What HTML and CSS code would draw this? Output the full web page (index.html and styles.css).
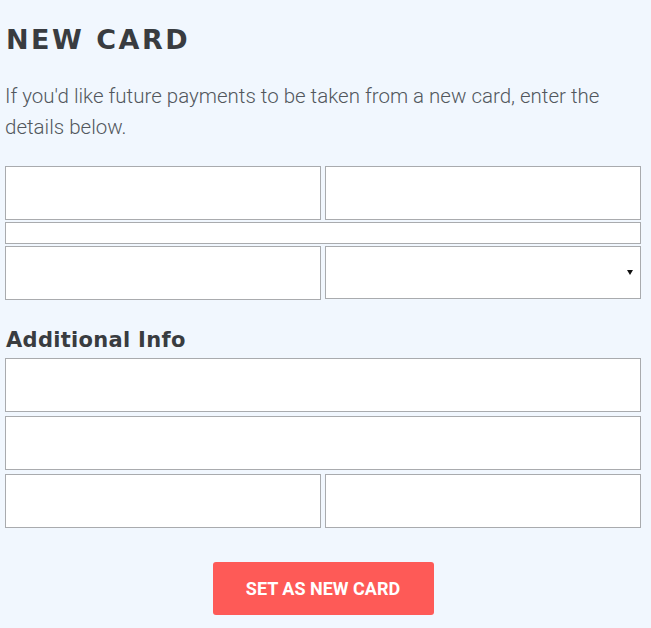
FILE: index.html
```html
<!DOCTYPE html>
<html>
<head>
<meta charset="utf-8">
<link rel="stylesheet" href="styles.css">
</head>
<body>
<div class="page">
  <h1 class="title">NEW CARD</h1>
  <p class="intro">If you'd like future payments to be taken from a new card, enter the details below.</p>
  <div class="card-fields">
    <div class="row two">
      <input class="field tall" type="text">
      <input class="field tall" type="text">
    </div>
    <div class="row">
      <input class="field thin" type="text">
    </div>
    <div class="row two">
      <input class="field tall" type="text">
      <div class="select-wrap"><select class="field select"><option></option></select></div>
    </div>
  </div>
  <h2 class="subtitle">Additional Info</h2>
  <div class="info-fields">
    <input class="field tall" type="text">
    <input class="field tall" type="text">
    <div class="row two">
      <input class="field tall" type="text">
      <input class="field tall" type="text">
    </div>
  </div>
  <div class="actions">
    <button class="btn" type="button">SET AS NEW CARD</button>
  </div>
</div>
</body>
</html>
```
FILE: styles.css
```css
html, body {
  margin: 0;
  padding: 0;
  background: #f1f7fe;
}
.page {
  width: 636px;
  padding: 0 10px 0 5px;
  font-family: Roboto, "Liberation Sans", sans-serif;
}
.title {
  margin: 0;
  padding-top: 24px;
  padding-left: 1px;
  font-family: "DejaVu Sans", sans-serif;
  font-weight: bold;
  font-size: 27px;
  line-height: 32px;
  letter-spacing: 2.5px;
  color: #393c40;
}
.intro {
  margin: 25px 0 0 0;
  font-weight: 300;
  font-size: 20.5px;
  line-height: 31px;
  color: #52575d;
}
.card-fields {
  margin-top: 23px;
  display: flex;
  flex-direction: column;
  gap: 2px;
}
.row {
  display: block;
}
.row.two {
  display: grid;
  grid-template-columns: minmax(0, 1fr) minmax(0, 1fr);
  column-gap: 4px;
}
.field {
  box-sizing: border-box;
  display: block;
  width: 100%;
  margin: 0;
  border: 1px solid #a9abae;
  background: #fff;
  border-radius: 0;
  outline: none;
  padding: 0 8px;
  font-family: Roboto, sans-serif;
  font-size: 16px;
}
.tall {
  height: 54px;
}
.thin {
  height: 22px;
}
.select-wrap {
  position: relative;
}
.select {
  -webkit-appearance: none;
  appearance: none;
  height: 53px;
}
.select-wrap::after {
  content: "";
  position: absolute;
  right: 8px;
  top: 24px;
  width: 0;
  height: 0;
  border-left: 3px solid transparent;
  border-right: 3px solid transparent;
  border-top: 5px solid #111;
}
.subtitle {
  margin: 28px 0 0 0;
  padding-left: 1px;
  font-family: "DejaVu Sans", sans-serif;
  font-weight: bold;
  font-size: 21px;
  line-height: 24px;
  letter-spacing: 0.3px;
  color: #393c40;
}
.info-fields {
  margin-top: 6px;
  display: flex;
  flex-direction: column;
  gap: 4px;
}
.actions {
  display: flex;
  justify-content: center;
  margin-top: 34px;
}
.btn {
  width: 221px;
  height: 53px;
  border: none;
  border-radius: 3px;
  background: #fe5a57;
  color: #fff;
  font-family: Roboto, sans-serif;
  font-weight: bold;
  font-size: 18px;
  cursor: pointer;
}
```
